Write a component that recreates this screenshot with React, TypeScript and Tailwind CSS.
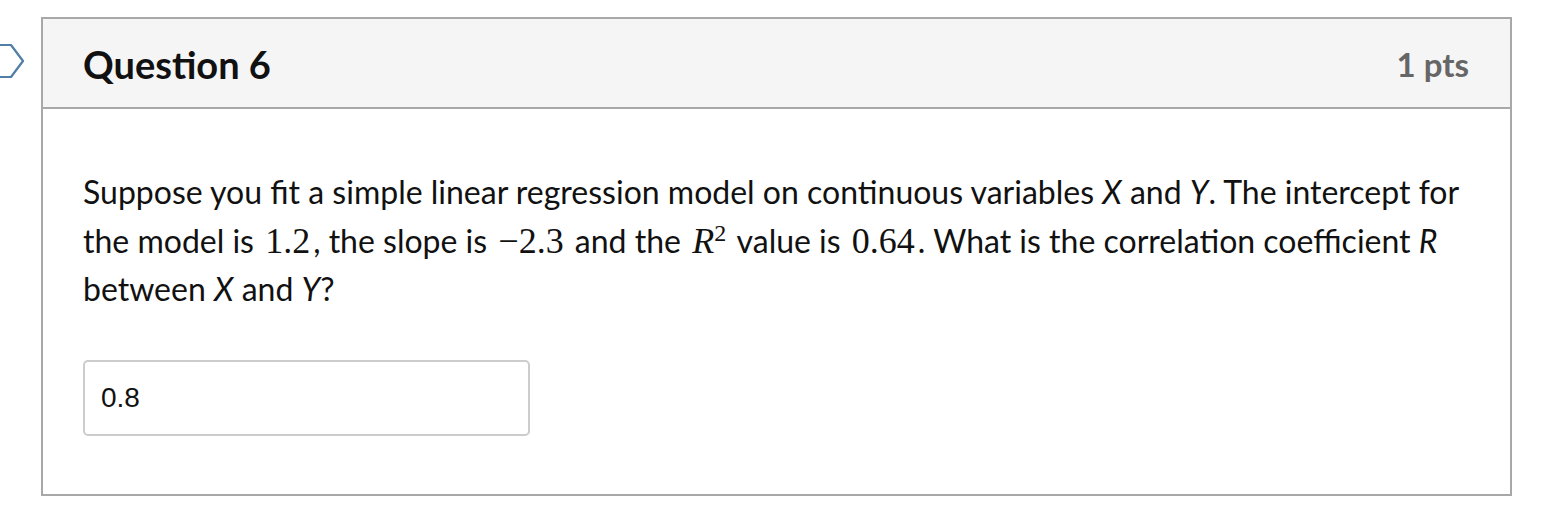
import React from 'react';

function M({ children }: { children: React.ReactNode }) {
  return <span className="mx-[3px] font-['Liberation_Serif',serif] text-[36px]">{children}</span>;
}

function Marker() {
  return (
    <svg className="absolute left-0 top-[43px]" width="26" height="36" viewBox="0 0 26 36">
      <path d="M-20 2 H11 L23 18 L11 34 H-20" fill="#fff" stroke="#4f7fa6" strokeWidth="2.2" strokeLinejoin="round" />
    </svg>
  );
}

export default function App() {
  return (
    <div className="relative min-h-[530px] w-[1562px] bg-white pt-[17px] font-['Lato',sans-serif]">
      <Marker />
      <div className="ml-[41px] w-[1471px] border-2 border-[#a8a8a8]">
        <div className="flex h-[90px] items-center justify-between border-b-2 border-[#a8a8a8] bg-[#f5f5f5] pl-[40px] pr-[41px]">
          <h2 className="pt-[2px] text-[38px] font-bold text-[#111]">Question 6</h2>
          <span className="pt-[3px] text-[33px] font-bold text-[#666]">1 pts</span>
        </div>
        <div className="pl-[40px] pr-[40px] pt-[59px] pb-[58px]">
          <p className="text-[32px] leading-[48.5px] text-[#111]">
            Suppose you fit a simple linear regression model on continuous variables <i>X</i> and <i>Y</i>. The intercept for the model is <M>1.2</M>, the slope is <M>−2.3</M> and the <M><i>R</i><sup className="text-[24px]">2</sup></M> value is <M>0.64</M>. What is the correlation coefficient <i>R</i> between <i>X</i> and <i>Y</i>?
          </p>
          <div className="mt-[46px] flex h-[76px] w-[447px] items-center rounded-[5px] border-2 border-[#ccc] bg-white pl-[16px] font-['Liberation_Sans',Arial,sans-serif] text-[28px] text-[#111]">
            0.8
          </div>
        </div>
      </div>
    </div>
  );
}
